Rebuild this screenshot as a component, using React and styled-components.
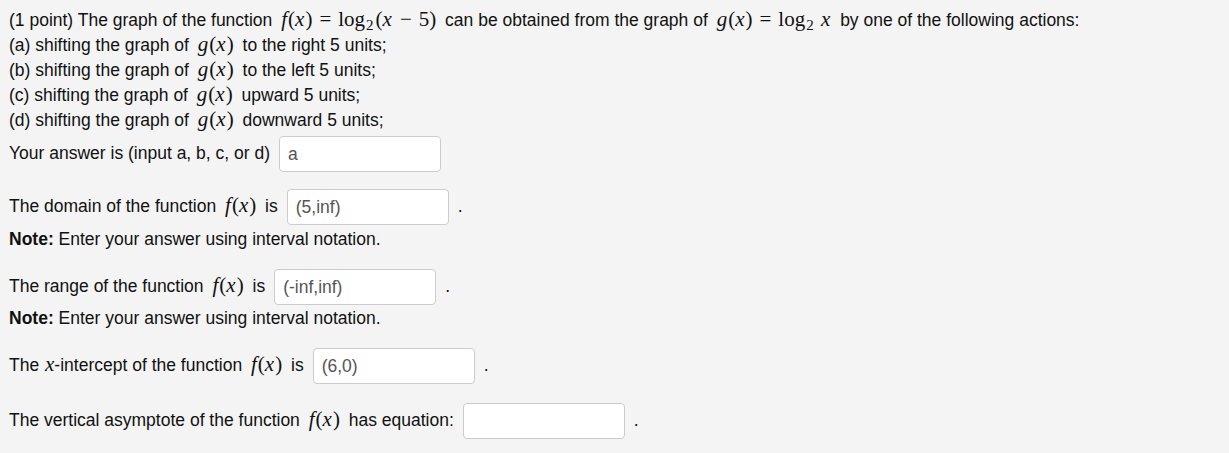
import React from "react";
import styled, { createGlobalStyle } from "styled-components";

const Global = createGlobalStyle`
  html, body {
    margin: 0;
    padding: 0;
    background: #f4f4f4;
  }
  body {
    font-family: "Liberation Sans", Arial, sans-serif;
    font-size: 17.5px;
    color: #111;
  }
`;

const Page = styled.div`
  padding: 8px 9px;
  line-height: 25px;
`;

const Line = styled.div`
  white-space: nowrap;
  height: 25px;
`;

const InputRow = styled.div`
  white-space: nowrap;
  line-height: 36px;
  height: 36px;
  margin-top: ${(p) => p.$top || 0}px;
`;

const Answer = styled.input`
  box-sizing: border-box;
  width: 162px;
  height: 36px;
  margin: 0 9px 0 9px;
  padding: 0 8px;
  border: 1px solid #cccccc;
  border-radius: 4px;
  background: #fff;
  font-family: "Liberation Sans", Arial, sans-serif;
  font-size: 17.5px;
  color: #555;
  vertical-align: middle;
  outline: none;
`;

const Note = styled.div`
  margin-top: ${(p) => p.$top || 0}px;
  white-space: nowrap;
  height: 25px;
  b {
    font-weight: bold;
  }
`;

const M = styled.span`
  font-family: "Liberation Serif", "DejaVu Serif", serif;
  font-size: 21px;
  line-height: 0;
  white-space: nowrap;
  margin: ${(p) => (p.$tight ? "0 0 0 1px" : "0 4px")};
`;

const V = styled.i`
  font-style: italic;
  margin-right: ${(p) => (p.$tight ? 0 : 1)}px;
`;

const Op = styled.span`
  margin: 0 7px;
`;

const Sub = styled.sub`
  font-size: 15px;
  vertical-align: -4px;
  line-height: 0;
  margin-left: 1px;
  margin-right: 2px;
`;

const fx = (
  <M>
    <V>f</V>(<V>x</V>)
  </M>
);

const gx = (
  <M>
    <V>g</V>(<V>x</V>)
  </M>
);

export default function App() {
  return (
    <>
      <Global />
      <Page>
        <Line>
          (1 point) The graph of the function{" "}
          <M>
            <V>f</V>(<V>x</V>)<Op>=</Op>log<Sub>2</Sub>(<V>x</V>
            <Op>−</Op>5)
          </M>{" "}
          can be obtained from the graph of{" "}
          <M>
            <V>g</V>(<V>x</V>)<Op>=</Op>log<Sub>2</Sub> <V>x</V>
          </M>{" "}
          by one of the following actions:
        </Line>
        <Line>(a) shifting the graph of {gx} to the right 5 units;</Line>
        <Line>(b) shifting the graph of {gx} to the left 5 units;</Line>
        <Line>(c) shifting the graph of {gx} upward 5 units;</Line>
        <Line>(d) shifting the graph of {gx} downward 5 units;</Line>
        <InputRow $top={2}>
          Your answer is (input a, b, c, or d)
          <Answer defaultValue="a" />
        </InputRow>

        <InputRow $top={17}>
          The domain of the function {fx} is
          <Answer defaultValue="(5,inf)" />.
        </InputRow>
        <Note $top={3}>
          <b>Note:</b> Enter your answer using interval notation.
        </Note>

        <InputRow $top={16}>
          The range of the function {fx} is
          <Answer defaultValue="(-inf,inf)" />.
        </InputRow>
        <Note $top={2}>
          <b>Note:</b> Enter your answer using interval notation.
        </Note>

        <InputRow $top={16}>
          The{" "}
          <M $tight>
            <V $tight>x</V>
          </M>
          -intercept of the function {fx} is
          <Answer defaultValue="(6,0)" />.
        </InputRow>

        <InputRow $top={19}>
          The vertical asymptote of the function {fx} has equation:
          <Answer defaultValue="" />.
        </InputRow>
      </Page>
    </>
  );
}
